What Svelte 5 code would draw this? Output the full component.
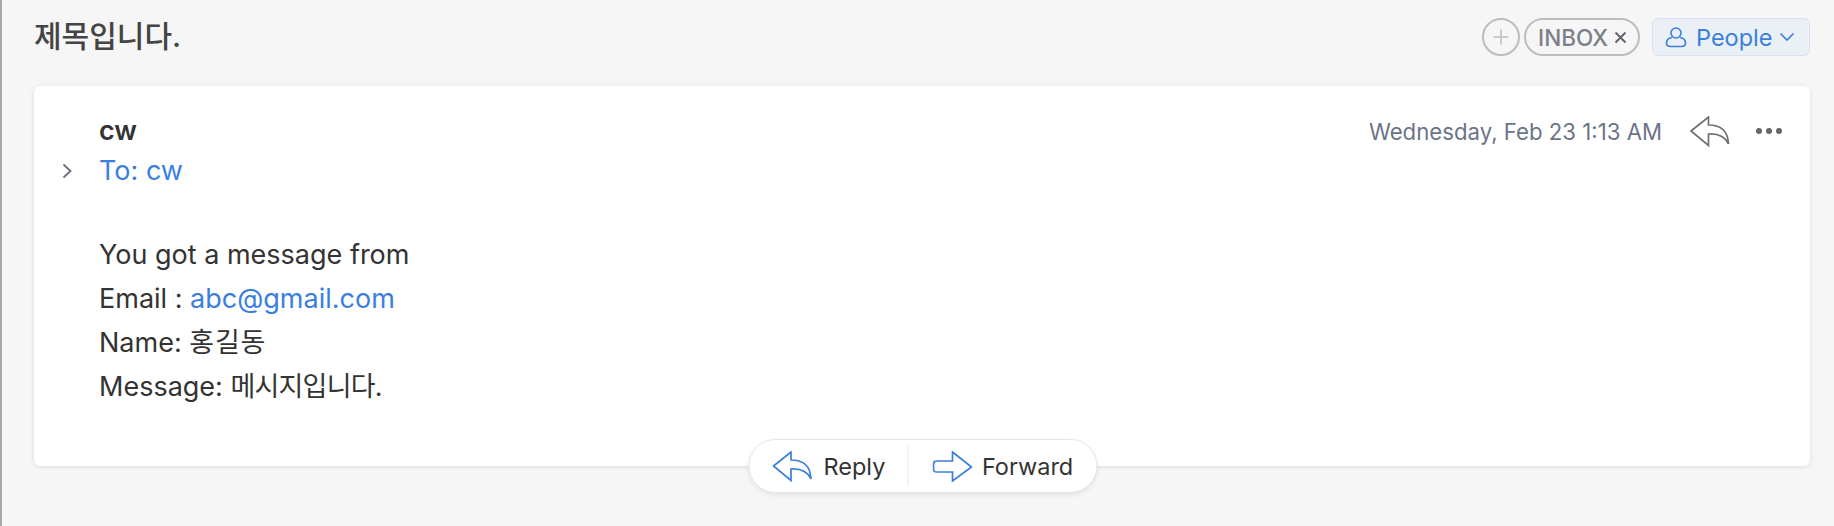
<script lang="ts">
	const subject = '제목입니다.';
</script>

<div class="page">
	<header class="subject-bar">
		<h1 class="subject">{subject}</h1>
		<div class="subject-actions">
			<button class="add-tag" aria-label="Add label">
				<svg width="20" height="20" viewBox="0 0 20 20"><path d="M10 2.500v15M2.500 10h15" /></svg>
			</button>
			<span class="tag">
				INBOX
				<svg width="13" height="13" viewBox="0 0 13 13"><path d="M1.500 1.500l10 10M11.500 1.500l-10 10" /></svg>
			</span>
			<button class="people">
				<svg class="person" width="22" height="22" viewBox="0 0 22 22">
					<circle cx="11" cy="7" r="5" />
					<path d="M7 11.500C3.500 12 1.500 14 1.500 17c0 2.500 1.500 3.500 4 3.500h11c2.500 0 4-1 4-3.500 0-3-2-5-5.500-5.500" />
				</svg>
				People
				<svg class="caret" width="16" height="10" viewBox="0 0 16 10"><path d="M1.500 1.500L8 8l6.500-6.500" /></svg>
			</button>
		</div>
	</header>

	<article class="card">
		<div class="card-head">
			<svg class="expand" width="10" height="16" viewBox="0 0 10 16"><path d="M1.500 1.500L8.500 8l-7 6.500" /></svg>
			<div class="who">
				<div class="from">cw</div>
				<div class="to">To: cw</div>
			</div>
			<div class="meta">
				<span class="date">Wednesday, Feb 23 1:13 AM</span>
				<svg class="reply-icon" width="40" height="31" viewBox="0 0 40 31">
					<path d="M1 15L18.500 1v8C30 9 38 14 38.500 28 35 20 28 17.500 18.500 18v11.500z" />
				</svg>
				<span class="dots"><i></i><i></i><i></i></span>
			</div>
		</div>

		<div class="body">
			<div>You got a message from</div>
			<div>Email : <a href="mailto:abc@gmail.com">abc@gmail.com</a></div>
			<div>Name: <span class="name-ko">홍길동</span></div>
			<div>Message: <span class="msg-ko">메시지입니다.</span></div>
		</div>

		<div class="footer-actions">
			<button class="footer-btn">
				<svg width="40" height="31" viewBox="0 0 40 31">
					<path d="M1 15L18.500 1v8C30 9 38 14 38.500 28 35 20 28 17.500 18.500 18v11.500z" />
				</svg>
				Reply
			</button>
			<span class="sep"></span>
			<button class="footer-btn forward">
				<svg width="40" height="31" viewBox="0 0 40 31">
					<path d="M20 1l19 15-19 14v-9H4q-3 0-3-3v-5q0-3 3-3h16z" />
				</svg>
				Forward
			</button>
		</div>
	</article>
</div>

<style>
	:global(body) {
		margin: 0;
		background: #f6f6f6;
	}

	.page {
		box-sizing: border-box;
		height: 526px;
		padding-right: 24px;
		padding-left: 32px;
		border-left: 2px solid #a9a9a9;
		background: #f6f6f6;
		color: #333;
		font-family: Inter, 'Noto Sans CJK KR', sans-serif;
	}

	.subject-bar {
		display: flex;
		align-items: center;
		justify-content: space-between;
		height: 86px;
		padding-bottom: 12px;
		box-sizing: border-box;
	}

	.subject {
		margin: 0 0 6px;
		font-size: 30px;
		font-weight: 500;
		color: #444;
	}

	.subject-actions {
		display: flex;
		align-items: center;
	}

	button {
		font-family: inherit;
		padding: 0;
		background: none;
		border: none;
	}

	.add-tag {
		display: flex;
		align-items: center;
		justify-content: center;
		box-sizing: border-box;
		width: 38px;
		height: 38px;
		margin-right: 4px;
		border: 2px solid #bcbdc2;
		border-radius: 50%;
	}

	.add-tag path {
		fill: none;
		stroke: #bcbdc2;
		stroke-width: 1.5;
	}

	.tag {
		display: flex;
		align-items: center;
		gap: 6px;
		box-sizing: border-box;
		width: 116px;
		height: 38px;
		padding-left: 12px;
		border: 2px solid #bcbdc2;
		border-radius: 19px;
		font-size: 22.500px;
		font-weight: 500;
		color: #7d7f8a;
	}

	.tag path {
		fill: none;
		stroke: #5f6068;
		stroke-width: 1.8;
	}

	.people {
		display: flex;
		align-items: center;
		box-sizing: border-box;
		width: 158px;
		height: 38px;
		margin-left: 12px;
		padding-left: 12px;
		border: 1.500px solid #d7e3f5;
		border-radius: 6px;
		background: #ebeff6;
		font-size: 23.500px;
		color: #3a7fe0;
	}

	.person {
		margin-right: 9px;
	}

	.person circle,
	.person path,
	.caret path {
		fill: none;
		stroke: #3a7fe0;
		stroke-width: 1.6;
	}

	.caret {
		margin-left: 7px;
	}

	.card {
		position: relative;
		box-sizing: border-box;
		height: 380px;
		padding: 25px 28px 0;
		border-radius: 6px;
		background: #fff;
		box-shadow: 0 1px 5px rgba(0, 0, 0, 0.1);
	}

	.card-head {
		display: flex;
		align-items: flex-start;
	}

	.expand {
		flex: none;
		margin-top: 52px;
		margin-right: 27px;
	}

	.expand path {
		fill: none;
		stroke: #6c6d7a;
		stroke-width: 1.8;
	}

	.who {
		flex: 1;
		font-size: 27px;
	}

	.from {
		height: 40px;
		line-height: 40px;
		font-weight: 600;
		color: #333;
	}

	.to {
		line-height: 40px;
		color: #3a7fe0;
	}

	.meta {
		display: flex;
		align-items: center;
		height: 40px;
	}

	.date {
		margin-right: 28px;
		font-size: 22.200px;
		color: #6b7487;
	}

	.reply-icon {
		margin-right: 26px;
	}

	.reply-icon path {
		fill: #fff;
		stroke: #6f6f6f;
		stroke-width: 1.7;
	}

	.dots {
		display: flex;
		gap: 4px;
	}

	.dots i {
		width: 6px;
		height: 6px;
		border-radius: 50%;
		background: #666;
	}

	.body {
		margin-top: 42px;
		padding-left: 37px;
		font-size: 27px;
		line-height: 44px;
		color: #333;
	}

	.body a {
		color: #3a7fe0;
		text-decoration: none;
	}

	.name-ko {
		letter-spacing: 0.8px;
	}

	.msg-ko {
		letter-spacing: -0.8px;
	}

	.footer-actions {
		position: absolute;
		left: calc(50% + 1px);
		bottom: -27px;
		display: flex;
		align-items: center;
		box-sizing: border-box;
		width: 349px;
		height: 54px;
		transform: translateX(-50%);
		border: 1.500px solid #e6e6e6;
		border-radius: 27px;
		background: #fff;
		box-shadow: 0 2px 5px rgba(0, 0, 0, 0.08);
	}

	.footer-btn {
		display: flex;
		align-items: center;
		gap: 11px;
		padding-left: 23px;
		font-size: 23.500px;
		color: #333;
	}

	.forward {
		gap: 9px;
		padding-left: 24px;
	}

	.footer-btn path {
		fill: #fff;
		stroke: #3a7fe0;
		stroke-width: 1.7;
	}

	.sep {
		width: 1.500px;
		height: 40px;
		margin-left: 22px;
		background: #e4e9f0;
	}
</style>
